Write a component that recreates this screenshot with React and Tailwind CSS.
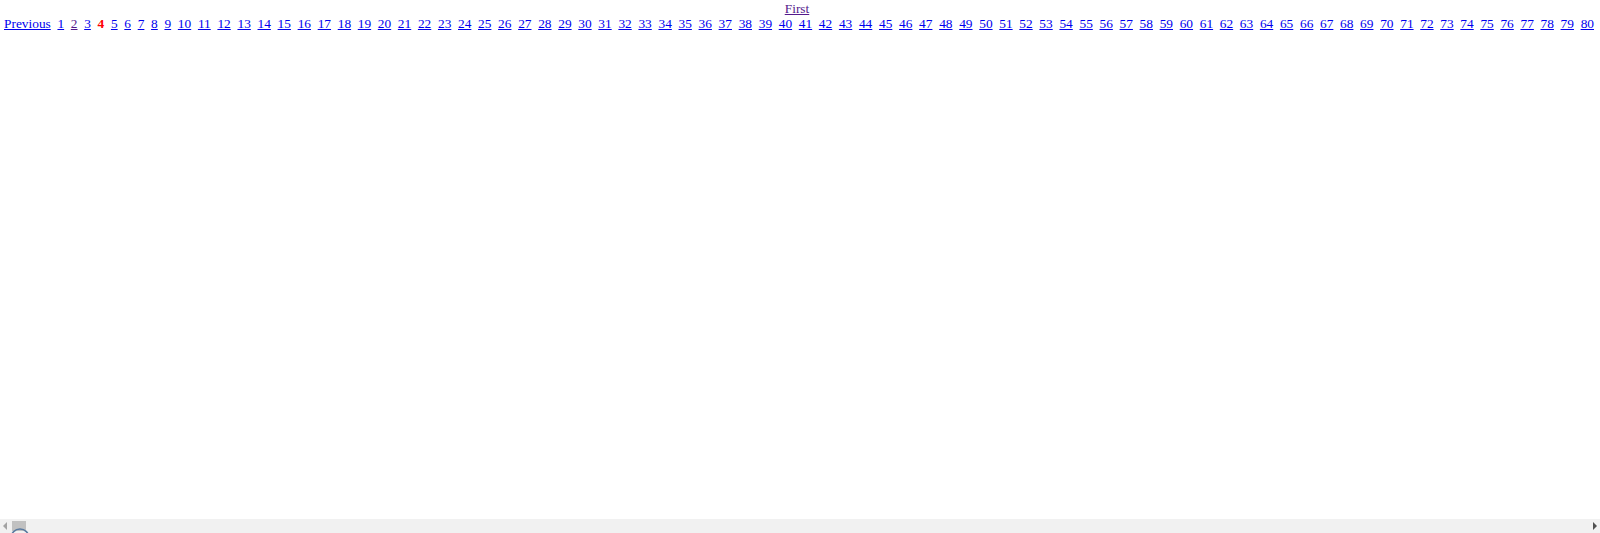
import React from 'react';

const pages = Array.from({ length: 200 }, (_, i) => i + 1);
const current = 4;
const visited = [2];

const Sep = () => <span>{'\u00a0 '}</span>;

const PageLink = ({ n }) => {
  if (n === current) {
    return <b className="text-[#ff0000] font-bold">{n}</b>;
  }
  const color = visited.includes(n) ? 'text-[#551a8b]' : 'text-[#0000ee]';
  return (
    <a href="#" className={`${color} underline`}>
      {n}
    </a>
  );
};

export default function App() {
  return (
    <div
      className="h-[533px] w-[1600px] flex flex-col overflow-hidden bg-white text-black"
      style={{ fontFamily: '"Liberation Serif", "Times New Roman", serif' }}
    >
      <div className="flex-1 overflow-hidden pt-px text-[13.37px] leading-[15px]">
        <div className="ml-1 w-[1586px] text-center">
          <a href="#" className="text-[#551a8b] underline">
            First
          </a>
        </div>
        <div className="pl-1 whitespace-nowrap">
          <a href="#" className="text-[#0000ee] underline">
            Previous
          </a>
          {pages.map((n) => (
            <React.Fragment key={n}>
              <Sep />
              <PageLink n={n} />
            </React.Fragment>
          ))}
        </div>
      </div>

      <div className="relative h-[14px] shrink-0 bg-[#f1f1f1] flex items-center justify-between px-[2px]">
        <svg width="6" height="8" viewBox="0 0 6 8">
          <path d="M5 0 L1 4 L5 8 Z" fill="#a3a3a3" />
        </svg>
        <div className="absolute left-[12px] top-[2px] h-[10px] w-[14px] bg-[#c1c1c1]" />
        <svg width="6" height="8" viewBox="0 0 6 8">
          <path d="M1 0 L5 4 L1 8 Z" fill="#505050" />
        </svg>
        <svg
          className="absolute left-[9px] top-[9px]"
          width="22"
          height="10"
          viewBox="0 0 22 10"
        >
          <path d="M2 10 A9 9 0 0 1 20 10" fill="none" stroke="#5a7aa0" strokeWidth="1.5" />
        </svg>
      </div>
    </div>
  );
}
